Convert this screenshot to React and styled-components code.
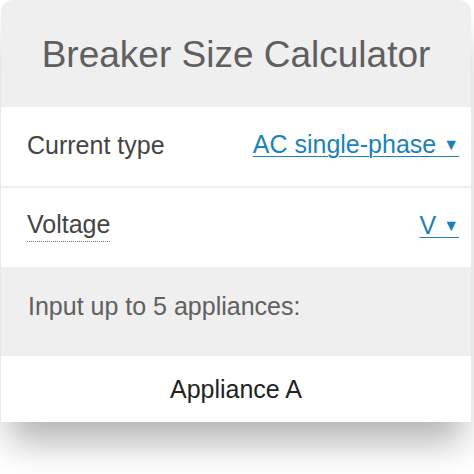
import React from "react";
import styled, { createGlobalStyle } from "styled-components";

const Global = createGlobalStyle`
  html, body {
    margin: 0;
    padding: 0;
    background: #ffffff;
  }
  body {
    font-family: "Liberation Sans", Arial, sans-serif;
  }
`;

const Page = styled.div`
  width: 474px;
  height: 474px;
  padding: 0 3px 0 1px;
  box-sizing: border-box;
  overflow: hidden;
`;

const Card = styled.section`
  display: flex;
  flex-direction: column;
  gap: 2px;
  background: #efefef;
  border-radius: 12px 12px 0 0;
  box-shadow: 0 28px 36px -8px rgba(0, 0, 0, 0.3);
`;

const Header = styled.h1`
  margin: 0;
  height: 105px;
  box-sizing: border-box;
  display: flex;
  align-items: center;
  justify-content: center;
  font-size: 37px;
  font-weight: 400;
  color: #5f5f5f;
  padding-top: 4px;
`;

const Row = styled.div`
  height: 79px;
  background: #ffffff;
  display: flex;
  align-items: center;
  justify-content: space-between;
  padding: 0 12px 4px 26px;
  box-sizing: border-box;
`;

const Label = styled.span`
  font-size: 25px;
  color: #444444;
  padding-bottom: ${(p) => (p.$dotted ? "2px" : "0")};
  border-bottom: ${(p) => (p.$dotted ? "1px dotted #777" : "none")};
  line-height: 1.2;
`;

const Select = styled.a`
  font-size: 25px;
  color: #1b82b8;
  text-decoration: underline;
  text-underline-offset: 3px;
  text-decoration-thickness: 1px;
  cursor: pointer;
`;

const Caret = styled.span`
  font-size: 16px;
  vertical-align: 3px;
`;

const Note = styled.div`
  height: 85px;
  display: flex;
  align-items: center;
  padding: 0 0 10px 27px;
  box-sizing: border-box;
  font-size: 25px;
  color: #606060;
`;

const Appliance = styled.div`
  height: 66px;
  background: #ffffff;
  display: flex;
  align-items: center;
  justify-content: center;
  font-size: 25px;
  color: #222222;
`;

export default function App() {
  return (
    <Page>
      <Global />
      <Card>
        <Header>Breaker Size Calculator</Header>
        <Row>
          <Label>Current type</Label>
          <Select>
            AC single-phase <Caret>▼</Caret>
          </Select>
        </Row>
        <Row>
          <Label $dotted>Voltage</Label>
          <Select>
            V <Caret>▼</Caret>
          </Select>
        </Row>
        <Note>Input up to 5 appliances:</Note>
        <Appliance>Appliance A</Appliance>
      </Card>
    </Page>
  );
}
